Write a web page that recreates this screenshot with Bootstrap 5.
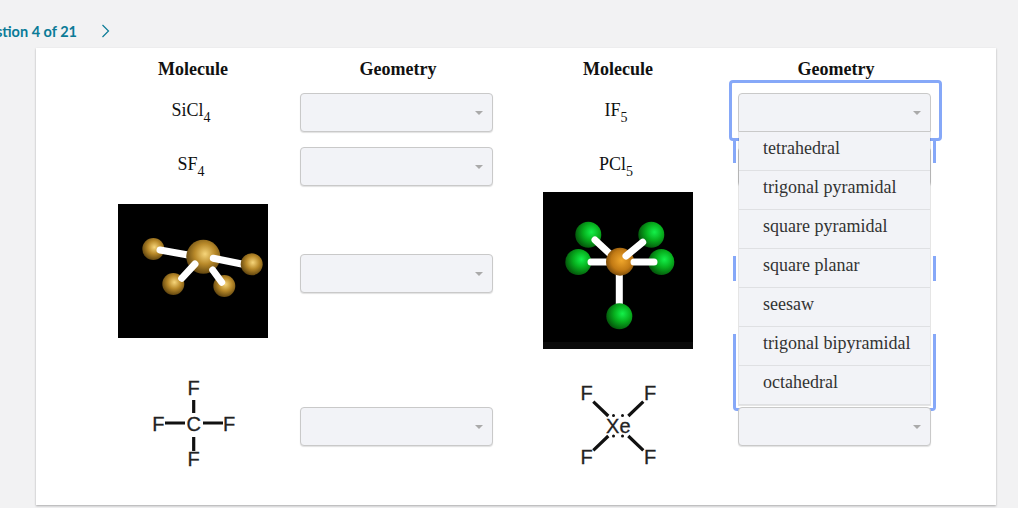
<!DOCTYPE html>
<html lang="en">
<head>
<meta charset="utf-8">
<title>Question 4 of 21</title>
<link href="https://cdn.jsdelivr.net/npm/bootstrap@5.3.0/dist/css/bootstrap.min.css" rel="stylesheet">
<style>
html,body{height:508px;overflow:hidden;background:#f2f2f3}
.qbar{height:48px;padding-top:22px;font-family:Lato,"Liberation Sans",sans-serif;font-weight:700;font-size:14.5px;line-height:20px;color:#0b7b97;overflow:hidden;white-space:nowrap}
.qbar-label{display:block;width:77px;direction:rtl;overflow:hidden;text-align:right}
.qbar-label bdi{direction:ltr}
.qsheet{width:960px;height:457px;margin-left:36px;background:#fff;box-shadow:0 1px 2px rgba(0,0,0,.3);position:relative;font-family:"Liberation Serif",serif;color:#111;
  display:grid;grid-template-columns:64px 186px 221px 222px 211px;grid-template-rows:38px 53px 53px 157px 156px}
.hcell{font-weight:700;font-size:18px;line-height:22px;padding-top:10px;text-align:center}
.hcell-geo{padding-left:3px}
.mcell{font-size:18px;line-height:24px;text-align:center;padding-top:12px;padding-right:4px}
.mcell-low{padding-top:13px}
.mcell sub{font-size:14px;bottom:-.4em}
.pic{display:flex;justify-content:center;align-items:flex-start}
.pic-a{padding-top:12px}.pic-b{padding-top:25px}.pic-c{padding-top:26px}
.geo{position:relative;justify-self:center;align-self:start;width:193px}
.r1{margin-top:7px}.r2{margin-top:8px}.r3{margin-top:62px}.r4{margin-top:58px}
.picker{width:193px;height:39px;padding:0 9px 0 0;background:#f2f3f7;border:1px solid #c9c9c9;border-radius:4px;box-shadow:0 1px 1px rgba(0,0,0,.12);display:flex;justify-content:flex-end;align-items:center;font-size:14px;color:#aaa}
.picker:hover,.picker:active,.picker:focus{background:#f2f3f7;border-color:#c9c9c9;color:#aaa}
.picker-open{border-bottom-left-radius:0;border-bottom-right-radius:0;box-shadow:none}
.opts{display:block;position:absolute;top:39px;left:0;width:193px;min-width:0;margin:0;padding:0;background:#f2f3f7;background-clip:padding-box;border:1px solid rgba(0,0,0,.1);border-top:0;border-radius:0;z-index:5}
.opts .dropdown-item{height:39px;padding:0 0 0 24px;font-size:18px;line-height:32px;color:#333;border-bottom:1px solid #dfe0e3}
.ring{position:absolute;border:3px solid #86a8f8;z-index:1;pointer-events:none}
.ring-a{left:693px;top:32px;width:213px;height:61px;border-radius:4px}
.ring-b{left:697px;top:90px;width:203px;height:25px;border-width:0 3px}
.ring-c{left:697px;top:208px;width:203px;height:25px;border-width:0 3px}
.ring-d{left:697px;top:286px;width:203px;height:77px;border-top:0;border-radius:0 0 4px 4px}
.over{z-index:2}
.top{z-index:3}
.chev{margin-top:2px}
svg text{font-family:"Liberation Sans",sans-serif;font-size:20px;fill:#222;stroke:#222;stroke-width:.3;text-anchor:middle}
</style>
</head>
<body>
<div class="qbar d-flex align-items-start">
  <span class="qbar-label"><bdi>Question 4 of 21</bdi></span>
  <svg class="ms-4 chev" width="9" height="14" viewBox="0 0 9 14"><path d="M1.5 1 L7.5 7 L1.5 13" fill="none" stroke="#0b7b97" stroke-width="1.2"/></svg>
</div>

<div class="qsheet">
  <span class="ring ring-a"></span><span class="ring ring-b"></span><span class="ring ring-c"></span><span class="ring ring-d"></span>

  <div></div>
  <div class="hcell">Molecule</div>
  <div class="hcell hcell-geo">Geometry</div>
  <div class="hcell">Molecule</div>
  <div class="hcell hcell-geo">Geometry</div>

  <div></div>
  <div class="mcell">SiCl<sub>4</sub></div>
  <div class="geo r1"><button type="button" class="btn picker dropdown-toggle" aria-label="Geometry"></button></div>
  <div class="mcell">IF<sub>5</sub></div>
  <div class="geo r1 over">
    <button type="button" class="btn picker picker-open dropdown-toggle" aria-label="Geometry"></button>
    <ul class="dropdown-menu show opts">
      <li><a class="dropdown-item" href="#">tetrahedral</a></li>
      <li><a class="dropdown-item" href="#">trigonal pyramidal</a></li>
      <li><a class="dropdown-item" href="#">square pyramidal</a></li>
      <li><a class="dropdown-item" href="#">square planar</a></li>
      <li><a class="dropdown-item" href="#">seesaw</a></li>
      <li><a class="dropdown-item" href="#">trigonal bipyramidal</a></li>
      <li><a class="dropdown-item" href="#">octahedral</a></li>
    </ul>
  </div>

  <div></div>
  <div class="mcell mcell-low">SF<sub>4</sub></div>
  <div class="geo r2"><button type="button" class="btn picker dropdown-toggle" aria-label="Geometry"></button></div>
  <div class="mcell mcell-low">PCl<sub>5</sub></div>
  <div class="geo r2"><button type="button" class="btn picker dropdown-toggle" aria-label="Geometry"></button></div>

  <div></div>
  <div class="pic pic-a">
    <svg width="150" height="134" viewBox="0 0 150 134">
      <defs>
        <radialGradient id="gold" cx=".55" cy=".42" r=".6"><stop offset="0" stop-color="#f6d57a"/><stop offset=".5" stop-color="#b98a2a"/><stop offset="1" stop-color="#5e430e"/></radialGradient>
      </defs>
      <rect width="150" height="134" fill="#000"/>
      <circle cx="35.3" cy="45" r="11" fill="url(#gold)"/>
      <circle cx="55.3" cy="80" r="11" fill="url(#gold)"/>
      <circle cx="106.3" cy="82" r="11" fill="url(#gold)"/>
      <path d="M42 46 L70 51" stroke="#fff" stroke-width="7" stroke-linecap="round"/>
      <circle cx="85.3" cy="52.7" r="17" fill="url(#gold)"/>
      <path d="M95.3 54.3 L125 60.3" stroke="#fff" stroke-width="7" stroke-linecap="round"/>
      <path d="M77 60 L63.7 74.3 M94.7 66 L103.7 78.3" stroke="#fff" stroke-width="7" stroke-linecap="round"/>
      <circle cx="133.7" cy="60.3" r="11" fill="url(#gold)"/>
    </svg>
  </div>
  <div class="geo r3"><button type="button" class="btn picker dropdown-toggle" aria-label="Geometry"></button></div>
  <div class="pic">
    <svg width="150" height="157" viewBox="0 0 150 157">
      <defs>
        <radialGradient id="green" cx=".62" cy=".4" r=".62"><stop offset="0" stop-color="#14f04a"/><stop offset=".5" stop-color="#07b01e"/><stop offset="1" stop-color="#045c0c"/></radialGradient>
        <radialGradient id="amber" cx=".55" cy=".45" r=".6"><stop offset="0" stop-color="#f0a72c"/><stop offset=".6" stop-color="#c27a14"/><stop offset="1" stop-color="#6e440a"/></radialGradient>
      </defs>
      <rect width="150" height="157" fill="#000"/>
      <rect y="150" width="150" height="7" fill="#0a0a0a"/>
      <circle cx="45.3" cy="42.7" r="13" fill="url(#green)"/>
      <circle cx="108.3" cy="42.7" r="13" fill="url(#green)"/>
      <circle cx="35.3" cy="70" r="13" fill="url(#green)"/>
      <circle cx="118.3" cy="70" r="13" fill="url(#green)"/>
      <path d="M52 48 L66.3 61.3 M48 70 L68.7 70 M76.3 82.3 L76.3 113" stroke="#fff" stroke-width="7" stroke-linecap="round"/>
      <circle cx="77" cy="69.7" r="14" fill="url(#amber)"/>
      <path d="M99.7 50.3 L83 64 M91 70 L111 70" stroke="#fff" stroke-width="7" stroke-linecap="round"/>
      <circle cx="76.3" cy="124.3" r="13" fill="url(#green)"/>
    </svg>
  </div>
  <div class="geo r3"></div>

  <div></div>
  <div class="pic pic-b">
    <svg width="100" height="100" viewBox="0 0 100 100">
      <text x="50.7" y="21">F</text><text x="50.7" y="57">C</text>
      <text x="15.3" y="57">F</text><text x="86" y="57">F</text><text x="50.7" y="92">F</text>
      <path d="M50.7 26 V39 M50.7 63 V77 M22 49 H42 M60 49 H80" stroke="#111" stroke-width="3.2"/>
    </svg>
  </div>
  <div class="geo r4"><button type="button" class="btn picker dropdown-toggle" aria-label="Geometry"></button></div>
  <div class="pic pic-c">
    <svg width="100" height="100" viewBox="0 0 100 100">
      <text x="18.7" y="25">F</text><text x="82" y="25">F</text>
      <text x="50.3" y="58">Xe</text>
      <text x="18.7" y="89">F</text><text x="82" y="89">F</text>
      <path d="M25.3 26.7 L40.3 41 M75.3 26.7 L60.3 41 M40.3 61 L25.3 75.3 M60.3 61 L75.3 75.3" stroke="#111" stroke-width="3.2"/>
      <path d="M45.5 40.5h.01M54.5 40.5h.01M45.5 61h.01M54.5 61h.01" stroke="#111" stroke-width="3" stroke-linecap="round"/>
    </svg>
  </div>
  <div class="geo r4 top"><button type="button" class="btn picker dropdown-toggle" aria-label="Geometry"></button></div>
</div>

<script src="https://cdn.jsdelivr.net/npm/bootstrap@5.3.0/dist/js/bootstrap.bundle.min.js"></script>
</body>
</html>
